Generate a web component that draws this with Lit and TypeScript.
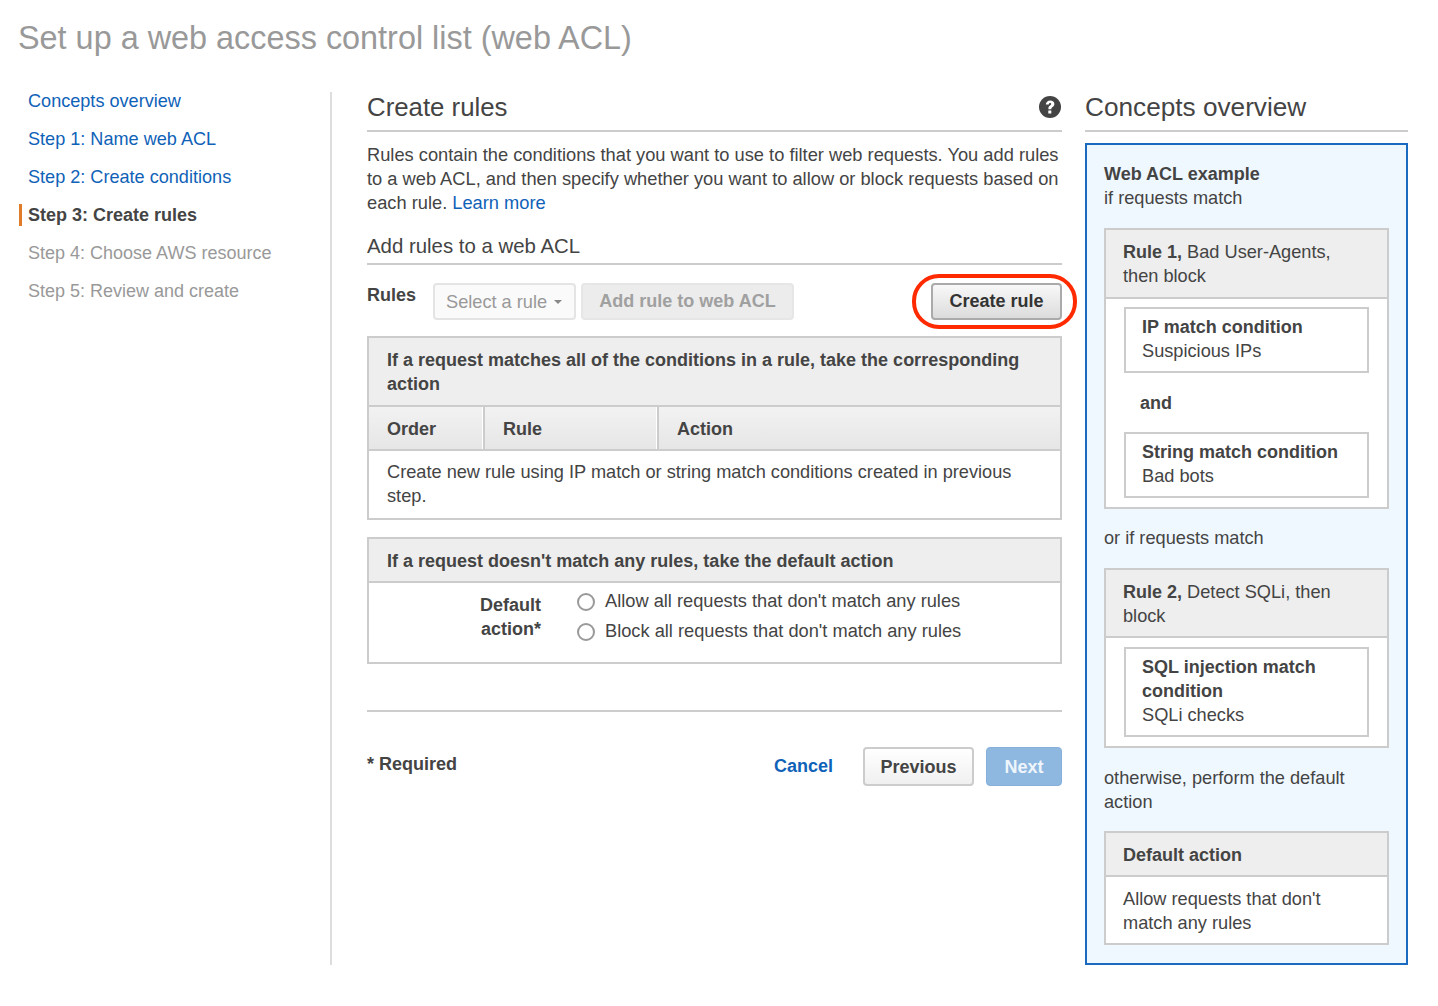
import { LitElement, html, css } from "lit";
import { customElement } from "lit/decorators.js";

@customElement("app-root")
export class AppRoot extends LitElement {
  static styles = css`
    :host { display: block; width: 1438px; height: 1006px; background: #fff; color: #444; font: 18.2px/24px "Liberation Sans", Arial, sans-serif; box-sizing: border-box; overflow: hidden; }
    * { box-sizing: border-box; }
    h1, h2, h3, p { margin: 0; font-weight: 400; }
    a { color: #0f62b8; text-decoration: none; }
    b, .bold { font-weight: 700; font-size: 18px; }
    .title { font-size: 32.4px; line-height: 40px; color: #999; padding: 18px 0 0 18px; height: 92px; }
    .cols { display: flex; height: 873px; }
    .nav { width: 314px; margin-left: 18px; border-right: 2px solid #ddd; flex: none; display: flex; flex-direction: column; font-size: 18.100px; }
    .nav div { height: 38.2px; display: flex; align-items: center; padding-left: 10px; margin-right: 20px; }
    .nav div:first-child { margin-top: -10px; }
    .nav .wrap { height: 22px; margin: 7.500px 20px 8px 1px; padding-left: 6px; border-left: 3px solid #e07b29; font-weight: 700; font-size: 18px; color: #444; }
    .nav .off { color: #999; font-size: 18px; }
    .main { width: 695px; margin-left: 35px; flex: none; }
    .side { width: 323px; margin-left: 23px; flex: none; display: flex; flex-direction: column; }
    .head { height: 40px; border-bottom: 2px solid #ccc; display: flex; justify-content: space-between; align-items: flex-start; color: #444; }
    .head h2 { font-size: 25.800px; line-height: 30px; }
    .side .head h2 { font-size: 26.200px; }
    .help { width: 22px; height: 22px; margin: 4px 1px 0 0; }
    .intro { margin-top: 11px; font-size: 18.280px; }
    .sub { margin-top: 19px; height: 31px; border-bottom: 2px solid #ccc; font-size: 20.400px; line-height: 24px; }
    .rules { display: flex; height: 38px; margin-top: 18px; align-items: flex-start; position: relative; }
    .rules .lab { font-weight: 700; font-size: 18px; width: 66px; }
    .sel { height: 37px; width: 143px; border: 2px solid #e4e4e4; border-radius: 4px; background: #fafafa; color: #999; padding: 6px 11px; display: flex; align-items: center; }
    .caret { width: 0; height: 0; border: 4px solid transparent; border-top-color: #888; border-bottom: 0; margin-left: 7px; }
    .btn { height: 37px; border-radius: 4px; font-weight: 700; font-size: 18px; display: flex; align-items: center; justify-content: center; }
    .add, .create { padding-bottom: 2px; }
    .add { width: 213px; margin-left: 5px; background: #ececec; border: 2px solid #e6e6e6; color: #a0a0a0; }
    .create { width: 131px; margin-left: auto; border: 2px solid #aaa; background: linear-gradient(#f8f8f8, #dcdcdc); color: #333; }
    .ring { position: absolute; left: 545px; top: -9px; width: 165px; height: 55px; border: 4px solid #ff2a00; border-radius: 27px; }
    .box { border: 2px solid #ccc; }
    .hd { background: #eee; padding: 10px 18px 9px; font-weight: 700; font-size: 18px; border-bottom: 2px solid #ccc; }
    .t1 { margin-top: 15px; height: 184px; }
    .colsrow { display: flex; height: 44px; border-bottom: 2px solid #ccc; background: linear-gradient(#f2f2f2, #e6e6e6); font-weight: 700; font-size: 18px; }
    .colsrow div { display: flex; align-items: center; padding: 2px 0 0 18px; border-right: 2px solid #ccc; box-shadow: inset -1px 0 0 #fff; }
    .colsrow div:last-child { border: 0; box-shadow: none; flex: 1; }
    .tbody { padding: 9px 18px; }
    .t2 { margin-top: 17px; height: 127px; }
    .t2 .hd { height: 44px; }
    .form { display: flex; padding-top: 3px; }
    .fl { width: 172px; text-align: right; font-weight: 700; font-size: 18px; padding-top: 7px; margin-right: 36px; }
    .fl span { display: block; }
    .opt { height: 30px; display: flex; align-items: center; gap: 10px; font-size: 18.240px; }
    .radio { width: 18px; height: 18px; border: 2px solid #999; border-radius: 50%; background: #fff; margin-top: 2px; }
    .rule { border-top: 2px solid #ccc; margin-top: 46px; height: 37px; }
    .foot { display: flex; align-items: flex-start; }
    .req { font-weight: 700; font-size: 18px; margin-top: 5px; flex: 1; }
    .cancel { font-weight: 700; font-size: 18px; margin: 7px 30px 0 0; }
    .prev { width: 111px; height: 39px; border: 2px solid #ccc; background: linear-gradient(#fff, #f0f0f0); color: #444; }
    .next { width: 76px; height: 39px; margin-left: 12px; background: #8eb8e0; color: #eef5fb; border: 1px solid #86b0da; }
    .panel { margin-top: 11px; flex: 1; border: 2px solid #1a6bbf; background: #f0f8ff; padding: 17px 17px 0; }
    .in { background: #fff; border: 2px solid #ccc; }
    .hd2 { background: #eee; border-bottom: 2px solid #ccc; padding: 10px 45px 9px 17px; }
    .hd2.short { padding-bottom: 8px; }
    .cond { border: 2px solid #ccc; margin: 8px 18px 0; padding: 6px 16px 8px; }
    .cond.last { margin-bottom: 9px; }
    .and { font-weight: 700; font-size: 18px; padding: 18px 34px 17px; }
    .gap { margin: 17px 0 18px; }
    .gap.later { margin: 18px 0 17px; }
    .t { margin-top: 18px; }
    .pad { padding: 10px 17px 8px; }
  `;

  render() {
    return html`
      <h1 class="title">Set up a web access control list (web ACL)</h1>
      <div class="cols">
        <nav class="nav">
          <div><a href="#">Concepts overview</a></div>
          <div><a href="#">Step 1: Name web ACL</a></div>
          <div><a href="#">Step 2: Create conditions</a></div>
          <div class="wrap">Step 3: Create rules</div>
          <div class="off">Step 4: Choose AWS resource</div>
          <div class="off">Step 5: Review and create</div>
        </nav>
        <main class="main">
          <div class="head">
            <h2>Create rules</h2>
            <svg class="help" viewBox="0 0 22 22"><circle cx="11" cy="11" r="11" fill="#444"/><path d="M6.800 8.600c.1-2.600 1.900-4.200 4.400-4.200 2.500 0 4.200 1.500 4.200 3.500 0 1.500-.8 2.300-1.800 3-.9.6-1.300 1.100-1.300 2v.4H9.400v-.7c0-1.500.6-2.300 1.600-3 .7-.5 1.200-.9 1.200-1.500 0-.7-.5-1.100-1.100-1.100-.8 0-1.200.5-1.300 1.500z" fill="#fff"/><rect x="9.300" y="14.500" width="3" height="3" fill="#fff"/></svg>
          </div>
          <p class="intro">Rules contain the conditions that you want to use to filter web requests. You add rules to a web ACL, and then specify whether you want to allow or block requests based on each rule. <a href="#">Learn more</a></p>
          <h3 class="sub">Add rules to a web ACL</h3>
          <div class="rules">
            <div class="lab">Rules</div>
            <div class="sel">Select a rule<span class="caret"></span></div>
            <div class="btn add">Add rule to web ACL</div>
            <div class="btn create">Create rule</div>
            <div class="ring"></div>
          </div>
          <section class="box t1">
            <div class="hd">If a request matches all of the conditions in a rule, take the corresponding action</div>
            <div class="colsrow">
              <div style="width:116px">Order</div>
              <div style="width:174px">Rule</div>
              <div>Action</div>
            </div>
            <div class="tbody">Create new rule using IP match or string match conditions created in previous step.</div>
          </section>
          <section class="box t2">
            <div class="hd">If a request doesn't match any rules, take the default action</div>
            <div class="form">
              <div class="fl"><span>Default</span><span>action*</span></div>
              <div>
                <div class="opt"><span class="radio"></span>Allow all requests that don't match any rules</div>
                <div class="opt"><span class="radio"></span>Block all requests that don't match any rules</div>
              </div>
            </div>
          </section>
          <div class="rule"></div>
          <div class="foot">
            <div class="req">* Required</div>
            <a class="cancel" href="#">Cancel</a>
            <div class="btn prev">Previous</div>
            <div class="btn next">Next</div>
          </div>
        </main>
        <aside class="side">
          <div class="head"><h2>Concepts overview</h2></div>
          <div class="panel">
            <div><b>Web ACL example</b><br />if requests match</div>
            <div class="in t">
              <div class="hd2"><b>Rule 1,</b> Bad User-Agents, then block</div>
              <div class="cond"><b>IP match condition</b><br />Suspicious IPs</div>
              <div class="and">and</div>
              <div class="cond last" style="margin-top:0"><b>String match condition</b><br />Bad bots</div>
            </div>
            <div class="gap">or if requests match</div>
            <div class="in">
              <div class="hd2 short"><b>Rule 2,</b> Detect SQLi, then block</div>
              <div class="cond last" style="margin-top:9px"><b>SQL injection match condition</b><br />SQLi checks</div>
            </div>
            <div class="gap later">otherwise, perform the default action</div>
            <div class="in">
              <div class="hd2 short"><b>Default action</b></div>
              <div class="pad">Allow requests that don't match any rules</div>
            </div>
          </div>
        </aside>
      </div>
    `;
  }
}
